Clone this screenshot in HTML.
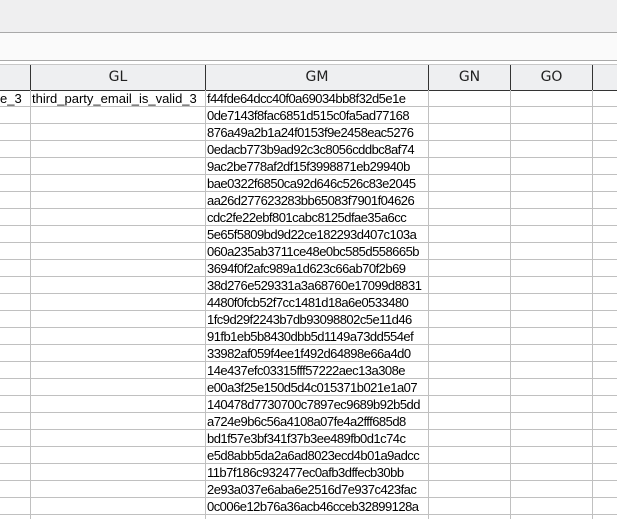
<!DOCTYPE html>
<html><head><style>
body{margin:0;width:617px;height:519px;overflow:hidden;background:#fff;font-family:"Liberation Sans",sans-serif;position:relative}
.tb{position:absolute;left:0;top:0;width:617px;height:32px;background:#efeff0;border-bottom:1px solid #a9a9a9}
.fb{position:absolute;left:0;top:33px;width:617px;height:27px;background:#fafafa;border-bottom:1px solid #a9a9a9}
.hdr{position:absolute;left:0;top:64px;width:617px;height:25px;background:#eeeff1;border-top:1px solid #c8c8c8;border-bottom:1px solid #333}
.hc{position:absolute;top:64px;height:25px;line-height:25px;text-align:center;font-size:16px;color:#222;border-right:1px solid #333;box-sizing:border-box;font-family:"DejaVu Sans","Liberation Sans",sans-serif;font-size:14px}
.vl{position:absolute;top:90px;bottom:0;width:1px;background:#c0c0c0}
.hl{position:absolute;left:0;width:617px;height:1px;background:#c0c0c0}
.t{position:absolute;font-size:13px;color:#000;white-space:nowrap;line-height:17px}
.h{letter-spacing:-0.53px}
</style></head><body>
<div class="tb"></div><div class="fb"></div>
<div class="hdr"></div>
<div class="hc" style="left:0;width:31px;top:65px"></div>
<div class="hc" style="left:31px;width:175px;top:65px">GL</div>
<div class="hc" style="left:206px;width:223px;top:65px">GM</div>
<div class="hc" style="left:429px;width:82px;top:65px">GN</div>
<div class="hc" style="left:511px;width:82px;top:65px">GO</div>
<div class="vl" style="left:30px"></div>
<div class="vl" style="left:205px"></div>
<div class="vl" style="left:428px"></div>
<div class="vl" style="left:510px"></div>
<div class="vl" style="left:592px"></div>
<div id="rows"></div>
<div class="t" style="left:0;top:90px">e_3</div>
<div class="t" style="left:32px;top:90px">third_party_email_is_valid_3</div>
<script>
var h=["f44fde64dcc40f0a69034bb8f32d5e1e","0de7143f8fac6851d515c0fa5ad77168","876a49a2b1a24f0153f9e2458eac5276","0edacb773b9ad92c3c8056cddbc8af74","9ac2be778af2df15f3998871eb29940b","bae0322f6850ca92d646c526c83e2045","aa26d277623283bb65083f7901f04626","cdc2fe22ebf801cabc8125dfae35a6cc","5e65f5809bd9d22ce182293d407c103a","060a235ab3711ce48e0bc585d558665b","3694f0f2afc989a1d623c66ab70f2b69","38d276e529331a3a68760e17099d8831","4480f0fcb52f7cc1481d18a6e0533480","1fc9d29f2243b7db93098802c5e11d46","91fb1eb5b8430dbb5d1149a73dd554ef","33982af059f4ee1f492d64898e66a4d0","14e437efc03315fff57222aec13a308e","e00a3f25e150d5d4c015371b021e1a07","140478d7730700c7897ec9689b92b5dd","a724e9b6c56a4108a07fe4a2fff685d8","bd1f57e3bf341f37b3ee489fb0d1c74c","e5d8abb5da2a6ad8023ecd4b01a9adcc","11b7f186c932477ec0afb3dffecb30bb","2e93a037e6aba6e2516d7e937c423fac","0c006e12b76a36acb46cceb32899128a"];
var s="";for(var i=0;i<h.length;i++){var y=90+i*17;s+='<div class="t h" style="left:207px;top:'+y+'px">'+h[i]+'</div><div class="hl" style="top:'+(y+16)+'px"></div>';}
document.getElementById("rows").innerHTML=s;
</script>
</body></html>
